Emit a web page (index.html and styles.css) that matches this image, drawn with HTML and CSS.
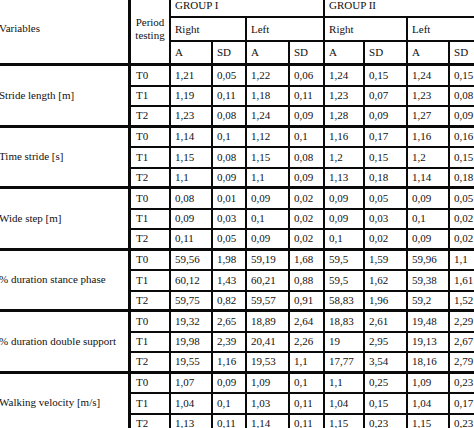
FILE: index.html
```html
<!DOCTYPE html>
<html>
<head>
<meta charset="utf-8">
<link rel="stylesheet" href="styles.css">
</head>
<body>
<table class="gait">
  <colgroup>
    <col class="c-var"><col class="c-per">
    <col class="c1"><col class="c2"><col class="c3"><col class="c4">
    <col class="c5"><col class="c6"><col class="c7"><col class="c8">
  </colgroup>
  <thead>
    <tr class="h1">
      <th class="var head-end" rowspan="3">Variables</th>
      <th class="per head-end" rowspan="3">Period testing</th>
      <th colspan="4">GROUP I</th>
      <th colspan="4">GROUP II</th>
    </tr>
    <tr class="h2">
      <th colspan="2">Right</th><th colspan="2">Left</th>
      <th colspan="2">Right</th><th colspan="2">Left</th>
    </tr>
    <tr class="h3">
      <th class="head-end">A</th><th class="head-end">SD</th>
      <th class="head-end">A</th><th class="head-end">SD</th>
      <th class="head-end">A</th><th class="head-end">SD</th>
      <th class="head-end">A</th><th class="head-end">SD</th>
    </tr>
  </thead>
  <tbody>
    <tr><td class="var grp-end" rowspan="3">Stride length [m]</td><td class="per">T0</td><td>1,21</td><td>0,05</td><td>1,22</td><td>0,06</td><td>1,24</td><td>0,15</td><td>1,24</td><td>0,15</td></tr>
    <tr><td class="per">T1</td><td>1,19</td><td>0,11</td><td>1,18</td><td>0,11</td><td>1,23</td><td>0,07</td><td>1,23</td><td>0,08</td></tr>
    <tr class="last"><td class="per">T2</td><td>1,23</td><td>0,08</td><td>1,24</td><td>0,09</td><td>1,28</td><td>0,09</td><td>1,27</td><td>0,09</td></tr>

    <tr><td class="var grp-end" rowspan="3">Time stride [s]</td><td class="per">T0</td><td>1,14</td><td>0,1</td><td>1,12</td><td>0,1</td><td>1,16</td><td>0,17</td><td>1,16</td><td>0,16</td></tr>
    <tr><td class="per">T1</td><td>1,15</td><td>0,08</td><td>1,15</td><td>0,08</td><td>1,2</td><td>0,15</td><td>1,2</td><td>0,15</td></tr>
    <tr class="last"><td class="per">T2</td><td>1,1</td><td>0,09</td><td>1,1</td><td>0,09</td><td>1,13</td><td>0,18</td><td>1,14</td><td>0,18</td></tr>

    <tr><td class="var grp-end" rowspan="3">Wide step [m]</td><td class="per">T0</td><td>0,08</td><td>0,01</td><td>0,09</td><td>0,02</td><td>0,09</td><td>0,05</td><td>0,09</td><td>0,05</td></tr>
    <tr><td class="per">T1</td><td>0,09</td><td>0,03</td><td>0,1</td><td>0,02</td><td>0,09</td><td>0,03</td><td>0,1</td><td>0,02</td></tr>
    <tr class="last"><td class="per">T2</td><td>0,11</td><td>0,05</td><td>0,09</td><td>0,02</td><td>0,1</td><td>0,02</td><td>0,09</td><td>0,02</td></tr>

    <tr><td class="var grp-end" rowspan="3">% duration stance phase</td><td class="per">T0</td><td>59,56</td><td>1,98</td><td>59,19</td><td>1,68</td><td>59,5</td><td>1,59</td><td>59,96</td><td>1,1</td></tr>
    <tr><td class="per">T1</td><td>60,12</td><td>1,43</td><td>60,21</td><td>0,88</td><td>59,5</td><td>1,62</td><td>59,38</td><td>1,61</td></tr>
    <tr class="last"><td class="per">T2</td><td>59,75</td><td>0,82</td><td>59,57</td><td>0,91</td><td>58,83</td><td>1,96</td><td>59,2</td><td>1,52</td></tr>

    <tr><td class="var grp-end" rowspan="3">% duration double support</td><td class="per">T0</td><td>19,32</td><td>2,65</td><td>18,89</td><td>2,64</td><td>18,83</td><td>2,61</td><td>19,48</td><td>2,29</td></tr>
    <tr><td class="per">T1</td><td>19,98</td><td>2,39</td><td>20,41</td><td>2,26</td><td>19</td><td>2,95</td><td>19,13</td><td>2,67</td></tr>
    <tr class="last"><td class="per">T2</td><td>19,55</td><td>1,16</td><td>19,53</td><td>1,1</td><td>17,77</td><td>3,54</td><td>18,16</td><td>2,79</td></tr>

    <tr><td class="var grp-end" rowspan="3">Walking velocity [m/s]</td><td class="per">T0</td><td>1,07</td><td>0,09</td><td>1,09</td><td>0,1</td><td>1,1</td><td>0,25</td><td>1,09</td><td>0,23</td></tr>
    <tr><td class="per">T1</td><td>1,04</td><td>0,1</td><td>1,03</td><td>0,11</td><td>1,04</td><td>0,15</td><td>1,04</td><td>0,17</td></tr>
    <tr class="last"><td class="per">T2</td><td>1,13</td><td>0,11</td><td>1,14</td><td>0,11</td><td>1,15</td><td>0,23</td><td>1,15</td><td>0,23</td></tr>
  </tbody>
</table>
</body>
</html>
```
FILE: styles.css
```css
html, body {
  margin: 0;
  padding: 0;
  background: #fff;
  overflow: hidden;
}

.gait {
  margin-left: -6px;
  margin-top: -6px;
  border-collapse: separate;
  border-spacing: 0;
  table-layout: fixed;
  width: 497px;
  font-family: "Liberation Serif", "Times New Roman", serif;
  font-size: 11px;
  line-height: 13px;
  color: #111;
}

.c-var { width: 137px; }
.c-per { width: 40px; }
.c1 { width: 42px; }
.c2 { width: 34px; }
.c3 { width: 43px; }
.c4 { width: 35px; }
.c5 { width: 40px; }
.c6 { width: 43px; }
.c7 { width: 42px; }
.c8 { width: 41px; }

.gait th,
.gait td {
  box-sizing: border-box;
  border-right: 2px solid #0a0a0a;
  border-bottom: 2px solid #0a0a0a;
  padding: 0 0 0 4px;
  text-align: left;
  vertical-align: middle;
  font-weight: normal;
  white-space: nowrap;
  overflow: hidden;
}

.gait .var {
  padding-left: 5px;
  border-right-width: 3px;
}

.gait .per {
  padding-left: 5px;
}

.gait th.per {
  white-space: normal;
  padding-left: 4px;
  padding-right: 4px;
  text-align: center;
}

.h1 th { height: 24px; }
.h2 th { height: 24px; }
.h3 th { height: 24px; }

.gait .head-end {
  border-bottom-width: 3px;
}

.gait tbody td {
  height: 20.5px;
}

.gait tr.last td,
.gait td.grp-end {
  border-bottom-width: 3px;
}
```
